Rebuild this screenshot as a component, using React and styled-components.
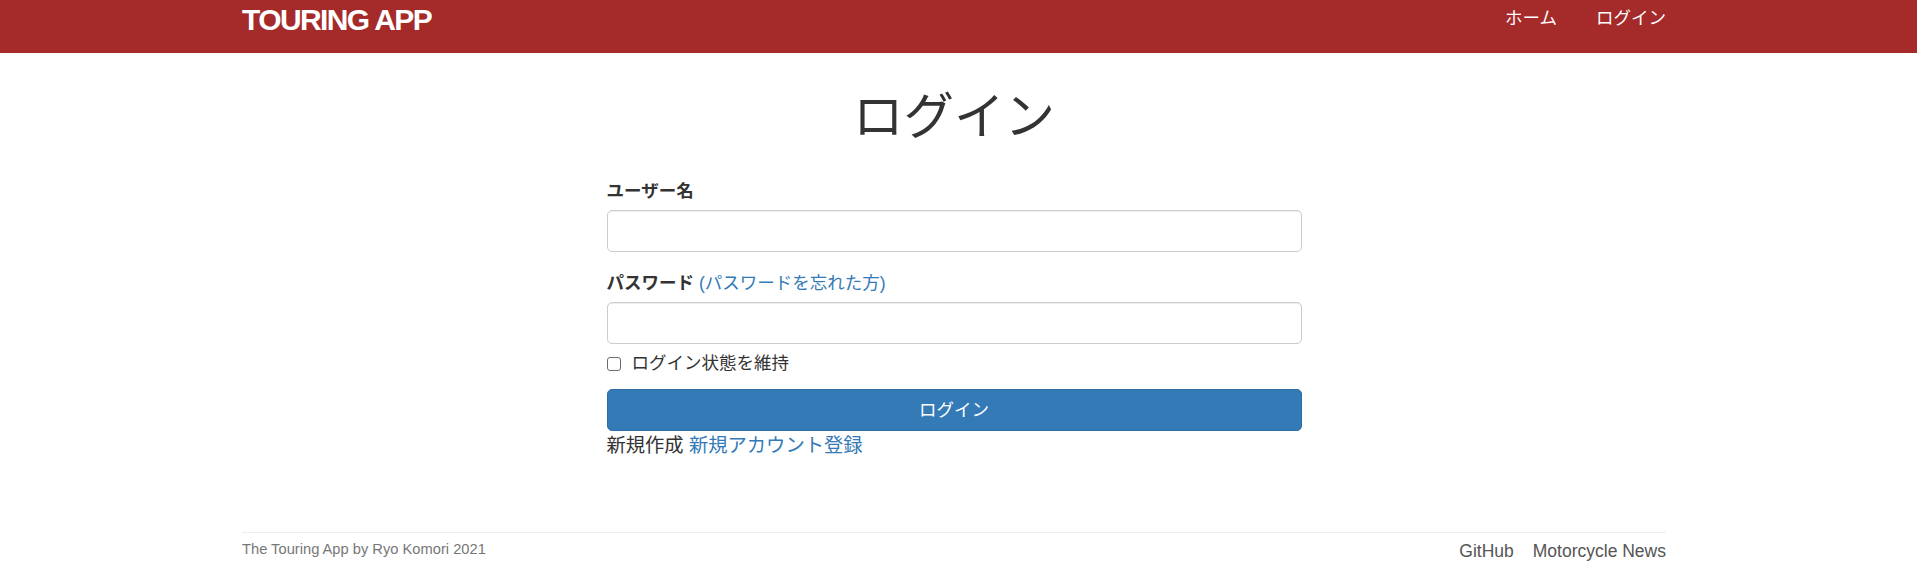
import React from 'react';
import styled, { createGlobalStyle } from 'styled-components';

const GlobalStyle = createGlobalStyle`
  html, body { margin: 0; padding: 0; background: #fff; }
  body {
    font-family: "Liberation Sans", "Noto Sans CJK JP", Arial, sans-serif;
    font-size: 17.5px;
    line-height: 25px;
    color: #333;
  }
  *, *::before, *::after { box-sizing: border-box; }
`;

const Navbar = styled.header`
  background: #a52a2a;
  height: 53px;
`;

const Container = styled.div`
  width: 1424px;
  margin-left: calc(50% - 716.5px);
`;

const NavInner = styled(Container)`
  display: flex;
  justify-content: space-between;
  align-items: flex-start;
  height: 100%;
`;

const Brand = styled.a`
  font-size: 30px;
  font-weight: 700;
  line-height: 39px;
  letter-spacing: -1.6px;
  color: #fff;
  text-decoration: none;
`;

const NavLinks = styled.nav`
  display: flex;
  gap: 39px;
  padding-top: 6px;
`;

const NavLink = styled.a`
  color: #fff;
  text-decoration: none;
  font-size: 17.5px;
  line-height: 25px;
`;

const Main = styled(Container)`
  display: flex;
  flex-direction: column;
  align-items: center;
`;

const Title = styled.h1`
  margin: 36px 0 0;
  font-size: 50.5px;
  line-height: 55px;
  font-weight: 400;
  color: #333;
  text-align: center;
`;

const Form = styled.form`
  width: 695px;
  margin-top: 35px;
  display: flex;
  flex-direction: column;
`;

const FieldGroup = styled.div`
  display: flex;
  flex-direction: column;
  gap: 6px;
  margin-bottom: ${(p) => p.$mb || 0}px;
`;

const Label = styled.label`
  font-weight: 700;
`;

const TextLink = styled.a`
  font-weight: 400;
  color: #337ab7;
  text-decoration: none;
`;

const Input = styled.input`
  display: block;
  height: 42px;
  width: 100%;
  margin: 0;
  border: 1px solid #ccc;
  border-radius: 5px;
  box-shadow: inset 0 1px 1px rgba(0, 0, 0, 0.075);
  padding: 7px 15px;
  font: inherit;
  color: #555;
  background: #fff;
`;

const CheckRow = styled.label`
  display: flex;
  align-items: center;
  gap: 11px;
  margin-top: 7px;
  font-weight: 400;
`;

const Check = styled.input.attrs({ type: 'checkbox' })`
  appearance: none;
  width: 14px;
  height: 14px;
  margin: 0;
  border: 1px solid #6b6b6b;
  border-radius: 3px;
  background: #fff;
  flex: none;
`;

const Button = styled.button`
  margin-top: 13px;
  height: 42px;
  width: 100%;
  background: #337ab7;
  border: 1px solid #2e6da4;
  border-radius: 5px;
  color: #fff;
  font: inherit;
  font-size: 17.5px;
  line-height: 25px;
  padding: 0;
`;

const SignupLine = styled.p`
  margin: 1px 0 0;
  font-size: 19.3px;
  line-height: 27px;
`;

const Footer = styled(Container)`
  margin-top: 73px;
  border-top: 1px solid #eee;
  padding-top: 6px;
  display: flex;
  justify-content: space-between;
  align-items: flex-start;
`;

const FooterText = styled.span`
  font-size: 14.7px;
  line-height: 21px;
  color: #777;
`;

const FooterLinks = styled.div`
  display: flex;
  gap: 19px;
`;

const FooterLink = styled.a`
  font-size: 17.5px;
  line-height: 25px;
  color: #555;
  text-decoration: none;
`;

export default function App() {
  return (
    <>
      <GlobalStyle />
      <Navbar>
        <NavInner>
          <Brand href="#">TOURING APP</Brand>
          <NavLinks>
            <NavLink href="#">ホーム</NavLink>
            <NavLink href="#">ログイン</NavLink>
          </NavLinks>
        </NavInner>
      </Navbar>
      <Main>
        <Title>ログイン</Title>
        <Form onSubmit={(e) => e.preventDefault()}>
          <FieldGroup $mb={19}>
            <Label htmlFor="username">ユーザー名</Label>
            <Input id="username" type="text" />
          </FieldGroup>
          <FieldGroup>
            <Label htmlFor="password">
              パスワード <TextLink href="#">(パスワードを忘れた方)</TextLink>
            </Label>
            <Input id="password" type="password" />
          </FieldGroup>
          <CheckRow>
            <Check />
            ログイン状態を維持
          </CheckRow>
          <Button type="submit">ログイン</Button>
          <SignupLine>
            新規作成 <TextLink href="#">新規アカウント登録</TextLink>
          </SignupLine>
        </Form>
      </Main>
      <Footer as="footer">
        <FooterText>The Touring App by Ryo Komori 2021</FooterText>
        <FooterLinks>
          <FooterLink href="#">GitHub</FooterLink>
          <FooterLink href="#">Motorcycle News</FooterLink>
        </FooterLinks>
      </Footer>
    </>
  );
}
